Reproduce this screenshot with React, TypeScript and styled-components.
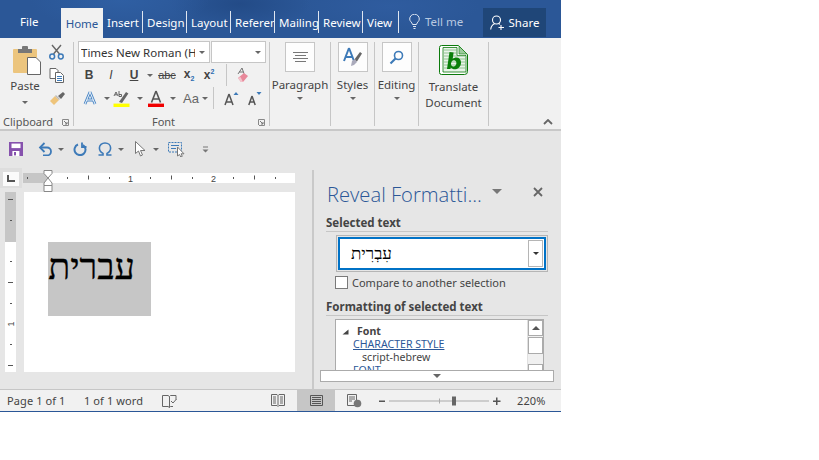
import React from "react";
import styled, { createGlobalStyle } from "styled-components";

const Global = createGlobalStyle`
  html, body { margin: 0; padding: 0; background: #fff; }
  body { font-family: "Noto Sans", "Open Sans", sans-serif; }
`;
const UI = `"Noto Sans", "Open Sans", sans-serif`;

const Win = styled.div`
  width: 561px; height: 412px; display: flex; flex-direction: column;
  background: #e6e6e6; overflow: hidden; font-family: ${UI}; color: #444; position: relative;
`;
const TitleBar = styled.div`
  height: 38px; flex: none; display: flex; align-items: flex-end; color: #fff;
  background:
    radial-gradient(ellipse 90px 30px at 120px 0px, #2f5fa3 0%, transparent 100%),
    radial-gradient(ellipse 70px 26px at 240px 4px, #234b87 0%, transparent 100%),
    radial-gradient(ellipse 90px 24px at 390px 6px, #2f5c9f 0%, transparent 100%),
    #2b5797;
`;
const Tab = styled.div<{ $w: number; $sep?: boolean; $active?: boolean }>`
  width: ${p => p.$w}px; height: ${p => (p.$active ? 30 : 22)}px; flex: none; box-sizing: border-box;
  display: flex; align-items: center; justify-content: ${p => (p.$active ? "center" : "flex-start")};
  margin-bottom: ${p => (p.$active ? 0 : 5)}px; padding-left: ${p => (p.$active ? 0 : 4)}px;
  font-size: 11.5px; white-space: nowrap; overflow: hidden;
  background: ${p => (p.$active ? "#f1f1f1" : "transparent")};
  color: ${p => (p.$active ? "#2b5797" : "#fff")};
  border-right: ${p => (p.$sep ? "1px solid #dfe6f0" : "none")};
`;
const FileTab = styled.div`
  width: 61px; height: 27px; margin-bottom: 3px; flex: none; display: flex; align-items: center;
  padding-left: 20px; box-sizing: border-box; font-size: 11.5px;
`;
const TellMe = styled.div`
  display: flex; align-items: center; gap: 5px; width: 84px; height: 27px; margin-bottom: 3px;
  padding-left: 10px; box-sizing: border-box; font-size: 11.5px; color: #b9c9e0; flex: none; white-space: nowrap;
`;
const Share = styled.div`
  width: 63px; height: 29px; margin-bottom: 1px; background: #1f4678; flex: none; display: flex; align-items: center;
  justify-content: center; gap: 4px; font-size: 11.5px; color: #fff;
`;
const Ribbon = styled.div`
  height: 93px; flex: none; background: #f1f1f1; display: flex; box-sizing: border-box;
  border-bottom: 2px solid #c8c8c8; position: relative;
`;
const Group = styled.div<{ $w: number }>`
  width: ${p => p.$w}px; flex: none; box-sizing: border-box; position: relative; height: 84px; margin-top: 4px;
  border-right: 1px solid #c6c6c6; display: flex; flex-direction: column;
`;
const GroupFooter = styled.div`
  position: absolute; left: 0; right: 0; bottom: -3px; height: 16px; display: flex; align-items: center;
  font-size: 11px; color: #555;
`;
const GroupName = styled.span<{ $center?: boolean }>`
  flex: 1; padding-left: ${p => (p.$center ? 0 : 3)}px; padding-right: ${p => (p.$center ? 5 : 0)}px; text-align: ${p => (p.$center ? "center" : "left")};
`;
const Launcher = styled.svg`
  width: 7px; height: 7px; margin: 2px 4px 0 0; flex: none;
`;
const ClipRow = styled.div`
  display: flex; padding-left: 3px;
`;
const PasteCol = styled.div`
  width: 44px; display: flex; flex-direction: column; align-items: center; padding-top: 4px;
`;
const ClipTools = styled.div`
  display: flex; flex-direction: column; gap: 8px; padding: 2px 0 0 2px;
`;
const Label = styled.div`
  font-size: 11.5px; line-height: 16px; color: #444; white-space: nowrap;
`;
const Caret = styled.span<{ $c?: string }>`
  display: inline-block; flex: none; width: 0; height: 0; border-left: 3px solid transparent;
  border-right: 3px solid transparent; border-top: 3px solid ${p => p.$c || "#666"};
`;
const FontGroupBody = styled.div`
  padding-left: 4px; display: flex; flex-direction: column;
`;
const ComboRow = styled.div`
  display: flex; gap: 1px; margin-top: -1px;
`;
const Combo = styled.div<{ $w: number }>`
  width: ${p => p.$w}px; height: 22px; background: #fff; border: 1px solid #c6c6c6; box-sizing: border-box;
  display: flex; align-items: center; padding: 0 4px 0 2px; font-size: 11.5px; color: #333; overflow: hidden;
  white-space: nowrap; justify-content: space-between;
`;
const ComboText = styled.span`
  width: 114px; overflow: hidden; flex: none;
`;
const ToolRow = styled.div<{ $mt: number }>`
  display: flex; align-items: center; height: 20px; margin-top: ${p => p.$mt}px; padding-left: 4px;
`;
const Tool = styled.div<{ $w: number; $ml?: number }>`
  width: ${p => p.$w}px; margin-left: ${p => p.$ml || 0}px; flex: none; display: flex; justify-content: center; align-items: center; height: 20px;
`;
const FmtLetter = styled.span<{ $u?: boolean; $s?: boolean; $i?: boolean; $b?: boolean; $size?: number; $c?: string }>`
  font-family: "Liberation Sans", sans-serif; font-size: ${p => p.$size || 12}px; color: ${p => p.$c || "#444"}; font-weight: ${p => (p.$b ? 700 : 400)};
  font-style: ${p => (p.$i ? "italic" : "normal")};
  text-decoration: ${p => (p.$u ? "underline" : p.$s ? "line-through" : "none")};
`;
const Sub = styled.span<{ $sup?: boolean }>`
  font-size: 7px; color: #2b6cb0; vertical-align: ${p => (p.$sup ? "super" : "sub")}; font-weight: 700;
`;
const VSep = styled.div`
  width: 1px; height: 22px; background: #c6c6c6; flex: none;
`;
const BigCol = styled.div`
  display: flex; flex-direction: column; align-items: center; height: 100%;
`;
const BigBox = styled.div`
  width: 30px; height: 30px; box-sizing: border-box; border: 1px solid #c6c6c6; background: #fdfdfd;
  display: flex; align-items: center; justify-content: center; margin-bottom: 5px; flex: none;
`;
const CaretLine = styled.div<{ $mt?: number }>`
  height: 10px; display: flex; align-items: center; margin-top: ${p => p.$mt || 0}px;
`;
const TranslateWrap = styled.div`
  height: 34px; padding-top: 3px;
`;
const Collapse = styled.svg`
  position: absolute; right: 8px; bottom: 4px; width: 10px; height: 6px;
`;
const Qat = styled.div`
  height: 38px; flex: none; display: flex; align-items: center; padding-left: 9px; margin-top: -1px;
`;
const QatIcon = styled.div<{ $ml: number }>`
  margin-left: ${p => p.$ml}px; display: flex; align-items: center; flex: none;
`;
const Work = styled.div`
  flex: 1; display: flex; min-height: 0; position: relative;
`;
const DocArea = styled.div`
  width: 312px; flex: none; position: relative; display: flex; flex-direction: column;
`;
const RulerRow = styled.div`
  height: 24px; flex: none; display: flex; align-items: flex-start;
`;
const Corner = styled.div`
  width: 22px; height: 20px; background: #dedede; flex: none; display: flex; align-items: center; justify-content: center;
`;
const CornerIn = styled.div`
  width: 16px; height: 14px; background: #fbfbfb; display: flex; align-items: center; justify-content: center; margin-top: 1px;
`;
const PageRow = styled.div`
  display: flex; height: 180px; padding-left: 5px;
`;
const Page = styled.div`
  width: 271px; height: 180px; background: #fff; margin-left: 8px; padding: 50px 0 0 24px; box-sizing: border-box; overflow: hidden;
`;
const Selected = styled.div`
  width: 103px; height: 74px; background: #c6c6c6; color: #000; font-family: "Liberation Serif", serif; font-size: 36px; line-height: 50px;
  direction: rtl; text-align: right; padding: 0 16px 0 0; box-sizing: border-box; -webkit-text-stroke: 0.3px #000;
`;
const Pane = styled.div`
  flex: 1; border-left: 2px solid #c9c9c9; margin-top: 2px; padding-left: 12px; box-sizing: border-box; position: relative; overflow: hidden;
`;
const PaneHead = styled.div`
  display: flex; align-items: center; height: 46px; padding: 0 0 0 1px;
`;
const PaneTitle = styled.div`
  font-size: 20.2px; color: #2b5797; font-family: "Open Sans", sans-serif; font-weight: 300; width: 165px; white-space: nowrap; flex: none; padding-top: 2px;
`;
const SectionTitle = styled.div<{ $mt: number }>`
  font-size: 11.5px; font-weight: 700; color: #444; border-bottom: 1px solid #c6c6c6; width: 222px; height: 14px; line-height: 13px;
  margin-top: ${p => p.$mt}px; white-space: nowrap; padding-bottom: 1px;
`;
const ComboOuter = styled.div`
  margin: 3px 0 0 10px; width: 212px; height: 37px; box-sizing: border-box; border: 1px solid #b5b5b5; padding: 1px; background: #e6e6e6;
`;
const ComboInner = styled.div`
  width: 100%; height: 100%; box-sizing: border-box; border: 2px solid #0072c6; background: #fff; display: flex; align-items: center; justify-content: space-between;
  padding: 1px;
`;
const Heb = styled.div`
  font-family: "Liberation Serif", serif; font-size: 17px; color: #000; margin-left: 10px; direction: rtl;
`;
const DropBtn = styled.div`
  width: 15px; height: 100%; box-sizing: border-box; border: 1px solid #b5b5b5; background: #fff; display: flex; align-items: center; justify-content: center;
`;
const CheckRow = styled.div`
  display: flex; align-items: center; gap: 4px; margin: 3px 0 0 9px; font-size: 11px; color: #444; height: 15px; white-space: nowrap;
`;
const CheckBox = styled.div`
  width: 13px; height: 13px; box-sizing: border-box; border: 1px solid #7a7a7a; background: #fff;
`;
const ListBox = styled.div`
  margin: 3px 0 0 9px; width: 209px; height: 55px; box-sizing: border-box; border: 1px solid #ababab; border-bottom: none; background: #fff; display: flex; position: relative;
`;
const ListText = styled.div`
  flex: 1; padding: 5px 0 0 17px; font-size: 10.6px; line-height: 13px; color: #444; overflow: hidden;
`;
const FontHead = styled.div`
  font-weight: 700; margin-left: 4px; position: relative;
`;
const Tri = styled.svg`
  position: absolute; left: -15px; top: 4px; width: 7px; height: 6px;
`;
const Link = styled.div`
  color: #2b5797; text-decoration: underline;
`;
const Plain = styled.div`
  margin-left: 9px;
`;
const Scroll = styled.div`
  width: 15px; flex: none; background: #f0f0f0; border-left: 1px solid #e0e0e0; display: flex; flex-direction: column;
`;
const ScrollBtn = styled.div`
  height: 16px; flex: none; box-sizing: border-box; border: 1px solid #ababab; background: #fff; display: flex; align-items: center; justify-content: center;
`;
const ScrollThumb = styled.div`
  height: 17px; flex: none; box-sizing: border-box; border: 1px solid #ababab; background: #fff; margin-top: 1px;
`;
const ScrollEnd = styled.div`
  height: 10px; flex: none; box-sizing: border-box; border: 1px solid #ababab; background: #fff; margin-top: 10px;
`;
const MoreBar = styled.div`
  position: absolute; left: 6px; top: 200px; width: 234px; height: 12px; box-sizing: border-box; border: 1px solid #ababab; background: #fff;
  display: flex; align-items: center; justify-content: center;
`;
const Status = styled.div`
  height: 23px; flex: none; box-sizing: border-box; background: #f1f1f1; border-top: 1px solid #c6c6c6; border-bottom: 1px solid #2b5797;
  display: flex; align-items: center; font-size: 11px; color: #444;
`;
const StatusText = styled.div<{ $w: number; $pl: number }>`
  width: ${p => p.$w}px; padding-left: ${p => p.$pl}px; flex: none; box-sizing: border-box; white-space: nowrap; letter-spacing: 0.1px;
`;
const ViewBtn = styled.div<{ $w: number; $on?: boolean; $ml?: number }>`
  width: ${p => p.$w}px; height: 21px; flex: none; display: flex; align-items: center; justify-content: center;
  margin-left: ${p => p.$ml || 0}px;
  background: ${p => (p.$on ? "#c6c6c6" : "transparent")};
`;
const Slider = styled.svg`
  width: 126px; height: 14px; flex: none; margin-left: 6px;
`;
const ProofIcon = styled.svg`
  flex: none;
`;
const CloseIcon = styled.svg`
  margin-left: 31px; margin-top: -3px; flex: none;
`;
const PaneCaret = styled(Caret)`
  border-left-width: 5px; border-right-width: 5px; border-top-width: 5px; margin-top: -4px;
`;
const PasteSvg = styled.svg`
  margin-left: 4px; flex: none;
`;
const PasteLabel = styled(Label)`
  margin-top: 3px;
`;
const RulerSvg = styled.svg`
  margin-top: 5px; margin-left: 1px; flex: none;
`;
const VRulerSvg = styled.svg`
  flex: none;
`;
const Marker = styled.svg`
  position: absolute; left: 43px; top: 2px; width: 10px; height: 22px;
`;

const Cut = () => (
  <svg width="15" height="16" viewBox="0 0 15 16" fill="none"><path d="M3 1l7.500 9M12 1L4.500 10" stroke="#666" strokeWidth="1.400"/><circle cx="3.200" cy="12.500" r="2.400" stroke="#3d7ab8" strokeWidth="1.500"/><circle cx="11.800" cy="12.500" r="2.400" stroke="#3d7ab8" strokeWidth="1.500"/></svg>
);
const Copy = () => (
  <svg width="16" height="15" viewBox="0 0 16 15" fill="none"><path d="M1 .5h6l2 2v8H1z" fill="#fff" stroke="#666"/><path d="M6.500 4.500h5l3 3v7h-8z" fill="#fff" stroke="#666"/><path d="M8 8.500h5M8 10.500h5M8 12.500h5" stroke="#3d7ab8"/></svg>
);
const Painter = () => (
  <svg width="17" height="15" viewBox="0 0 17 15"><path d="M1 10l5-5 4 4-5 5z" fill="#eec47b"/><path d="M6 5l4 4 1-1-4-4z" fill="#bbb"/><path d="M9 5l5-4 2 2-4 5z" fill="#666"/></svg>
);
const PasteIcon = () => (
  <PasteSvg width="28" height="29" viewBox="0 0 28 29"><rect x="0" y="3" width="24" height="24" rx="1" fill="#ecc57e"/><rect x="5" y="3" width="14" height="4" fill="#777"/><rect x="9" y="0" width="6" height="4" rx="1" fill="#777"/><path d="M14.500 11.500h8.500l4.500 4.500v12.500H14.500z" fill="#fff" stroke="#666"/></PasteSvg>
);
const LauncherIcon = () => (
  <Launcher viewBox="0 0 7 7" fill="none"><path d="M.5 6V.5H6.500V6.500H1" stroke="#888"/><path d="M2 2l3 3M5 3v2H3" stroke="#777"/></Launcher>
);
const BigA = () => (
  <svg width="14" height="16" viewBox="0 0 14 16"><path d="M7 2L2 14M7 2l5 12M4 10h6" stroke="#4a86c5" strokeWidth="2.800" fill="none"/><path d="M7 2L2 14M7 2l5 12M4 10h6" stroke="#fff" strokeWidth=".9" fill="none"/></svg>
);
const Highlight = () => (
  <svg width="17" height="17" viewBox="0 0 17 17"><path d="M1 6l2-4 2 4M2 4.800h2M6 1v5.500M6 4.500h2.500V6.500H6" stroke="#555" strokeWidth=".9" fill="none"/><path d="M6 12l7-10 2.400 1.600L9 13z" fill="#666"/><rect x="0.500" y="13.600" width="16" height="3.400" fill="#ffff00"/></svg>
);
const ColorA = () => (
  <svg width="16" height="17" viewBox="0 0 16 17"><path d="M8 1L3.500 12.500M8 1l4.500 11.500M5 9h6" stroke="#555" strokeWidth="1.600" fill="none"/><rect y="13.600" width="16" height="3.400" fill="#f00000"/></svg>
);
const Grow = ({ up }: { up: boolean }) => (
  <svg width="16" height="15" viewBox="0 0 16 15"><path d={up ? "M5 3L1 14M5 3l4 11M2.600 11h4.800" : "M5 5L1.800 14M5 5l3.200 9M3 11h4"} stroke="#555" strokeWidth="1.500" fill="none"/><path d={up ? "M9.500 4l2.500-3 2.500 3z" : "M9.500 1l2.500 3 2.500-3z"} fill="#3d7ab8"/></svg>
);
const Eraser = () => (
  <svg width="15" height="16" viewBox="0 0 15 16"><path d="M3 7l4-6 2 5.600M4.300 5h4" stroke="#666" fill="none" strokeWidth=".9"/><path d="M3 11l6-5 4 3-5 6H6z" fill="#e8889a"/><path d="M3 11l3 4h2l-2.500-5z" fill="#f4c4cd"/></svg>
);
const ParaIcon = () => (
  <svg width="15" height="11" viewBox="0 0 15 11" stroke="#777"><path d="M0 .5h15M2 3.500h11M0 6.500h15M2 9.500h11"/></svg>
);
const StylesIcon = () => (
  <svg width="20" height="20" viewBox="0 0 20 20"><path d="M6 1L1 14M6 1l5 13M2.800 10h6.400" stroke="#3d7ab8" strokeWidth="2" fill="none"/><path d="M11 13l6-8 2 1.500-5 8z" fill="#666"/><path d="M9 14l3-2 2 3-3 3-3 1z" fill="#aab"/></svg>
);
const FindIcon = () => (
  <svg width="15" height="15" viewBox="0 0 15 15" fill="none" stroke="#3d7ab8"><circle cx="9.500" cy="5.500" r="4" strokeWidth="1.600"/><path d="M6.500 8.500L1.500 13.500" strokeWidth="2.200"/></svg>
);
const TranslateIcon = () => (
  <svg width="29" height="31" viewBox="0 0 29 31"><path d="M2.500.5h17l9 9v17a3 3 0 01-3 3h-23a2 2 0 01-2-2v-25a2 2 0 012-2z" fill="#fff" stroke="#0b7a0b"/><path d="M4 2.500h14v8h9v16.500H4z" fill="#e9f4e9" stroke="#0b7a0b" strokeWidth=".8"/><path d="M20 1l8 8h-8z" fill="#9ccb9c" stroke="#0b7a0b" strokeWidth=".6"/><path d="M5 5h13M5 8h13M5 11h21M5 14h21M5 17h21M5 20h21M5 23h21" stroke="#7cb87c" strokeWidth=".8"/><path d="M10.500 7L8 24h3.400l.4-1.500c1 1.200 2.400 1.800 4 1.800 3.600 0 6.200-3 6.200-6.800 0-3-1.800-5-4.600-5-1.500 0-2.700.5-3.700 1.500l.9-6.500zM15 15.300c1.400 0 2.400 1 2.400 2.600 0 2-1.300 3.600-3 3.600-1.400 0-2.400-1-2.400-2.500 0-2 1.300-3.700 3-3.700z" fill="#0a7f0a" fillRule="evenodd"/></svg>
);
const Save = () => (
  <svg width="14" height="14" viewBox="0 0 14 14"><path d="M0 0h14v14H0z" fill="#8652ad"/><rect x="2.500" y="1.600" width="9" height="4.500" fill="#fff"/><rect x="3.400" y="9" width="7" height="5" fill="#fff"/><rect x="5" y="10" width="2" height="3.400" fill="#8652ad"/></svg>
);
const Undo = () => (
  <svg width="15" height="14" viewBox="0 0 15 14" fill="none"><path d="M2 5.500h7a4 4 0 010 8H5" stroke="#3d7ab8" strokeWidth="1.800"/><path d="M6.500 1L2 5.500 6.500 10" stroke="#3d7ab8" strokeWidth="1.800"/></svg>
);
const Redo = () => (
  <svg width="14" height="14" viewBox="0 0 14 14" fill="none"><path d="M5 2.500A5.500 5.500 0 1010 3" stroke="#3d7ab8" strokeWidth="2"/><path d="M9 .5v4.500h4.500" stroke="#3d7ab8" strokeWidth="1.800"/></svg>
);
const Omega = () => <svg width="14" height="14" viewBox="0 0 14 14" fill="none"><path d="M.5 13h4.500v-1.600C2.800 10.200 1.400 8.200 1.400 6c0-3.100 2.500-5 5.600-5s5.600 1.900 5.600 5c0 2.200-1.400 4.200-3.600 5.400V13h4.500" stroke="#3d7ab8" strokeWidth="1.600"/></svg>;
const Pointer = () => <svg width="11" height="16" viewBox="0 0 11 16"><path d="M.5.500v12l3-2.500 2 5 2-1-2-4.500h4.500z" fill="#fff" stroke="#777"/></svg>;
const SelectIcon = () => <svg width="17" height="15" viewBox="0 0 17 15" fill="none"><path d="M.5.500h13v9.500H.5z" stroke="#3d7ab8" strokeDasharray="2 1"/><path d="M3 3.500h8M3 6.500h5" stroke="#3d7ab8"/><path d="M9.500 5v9l2-1.500 1.300 2.500 1.500-.7-1.300-2.500h3z" fill="#fff" stroke="#777"/></svg>;
const Customize = () => <svg width="7" height="7" viewBox="0 0 7 7" fill="#777"><path d="M1 .5h5v1H1zM.5 3.500h6L3.500 6.500z"/></svg>;

const HRuler = () => (
  <RulerSvg width="272" height="10" viewBox="0 0 272 10">
    <rect width="272" height="10" fill="#fff" />
    <rect width="24" height="10" fill="#c6c6c6" />
    {[4, 44, 86, 127, 169, 210, 252].map(x => (<rect key={x} x={x} y="4" width="1" height="2" fill="#555" />))}
    {[65, 148, 231].map(x => (<rect key={x} x={x} y="2.500" width="1" height="4" fill="#555" />))}
    {[105, 188].map((x, i) => (<text key={x} x={x} y="8.500" fontSize="9" fontFamily="Liberation Sans" fill="#444">{i + 1}</text>))}
  </RulerSvg>
);
const VRuler = () => (
  <VRulerSvg width="11" height="180" viewBox="0 0 11 180">
    <rect width="11" height="180" fill="#fff" />
    <rect width="11" height="50" fill="#c6c6c6" />
    {[28, 69, 111, 152].map(y => (<rect key={y} x={5} y={y} width="2" height="1" fill="#555" />))}
    {[7, 90, 173].map(y => (<rect key={y} x={3} y={y} width="5" height="1" fill="#555" />))}
    <text x="0" y="0" fontSize="9" fontFamily="Liberation Sans" fill="#444" transform="translate(8.500 134.500) rotate(-90)">1</text>
  </VRulerSvg>
);

export default function App() {
  return (
    <>
      <Global />
      <Win>
        <TitleBar>
          <FileTab>File</FileTab>
          <Tab $w={42} $active>Home</Tab>
          <Tab $w={40} $sep>Insert</Tab>
          <Tab $w={44} $sep>Design</Tab>
          <Tab $w={44} $sep>Layout</Tab>
          <Tab $w={44} $sep>Referen</Tab>
          <Tab $w={44} $sep>Mailing</Tab>
          <Tab $w={44} $sep>Review</Tab>
          <Tab $w={36} $sep>View</Tab>
          <TellMe>
            <svg width="11" height="15" viewBox="0 0 11 15" fill="none" stroke="#dfe7f2"><path d="M3.500 10.500C3 8 .7 7.500.7 5a4.800 4.800 0 019.600 0c0 2.500-2.300 3-2.800 5.500zM4 12.500h3M4.500 14.500h2"/></svg>
            Tell me
          </TellMe>
          <Share>
            <svg width="15" height="15" viewBox="0 0 15 15" fill="none" stroke="#fff" strokeWidth="1.100"><circle cx="6.500" cy="5" r="4"/><path d="M.7 14.500c.3-3 2-5 3.800-5.800M8.500 8.500l1.500.7M11 10v5M8.500 12.500h5.500"/></svg>
            Share
          </Share>
        </TitleBar>
        <Ribbon>
          <Group $w={74}>
            <ClipRow>
              <PasteCol>
                <PasteIcon />
                <PasteLabel>Paste</PasteLabel>
                <CaretLine $mt={3}><Caret /></CaretLine>
              </PasteCol>
              <ClipTools>
                <Cut /><Copy /><Painter />
              </ClipTools>
            </ClipRow>
            <GroupFooter><GroupName>Clipboard</GroupName><LauncherIcon /></GroupFooter>
          </Group>
          <Group $w={196}>
            <FontGroupBody>
              <ComboRow>
                <Combo $w={132}><ComboText>Times New Roman (H</ComboText><Caret /></Combo>
                <Combo $w={55}><span /><Caret /></Combo>
              </ComboRow>
              <ToolRow $mt={2}>
                <Tool $w={12} $ml={1}><FmtLetter $b>B</FmtLetter></Tool>
                <Tool $w={10} $ml={11}><FmtLetter $i>I</FmtLetter></Tool>
                <Tool $w={12} $ml={12}><FmtLetter $u $b>U</FmtLetter></Tool>
                <Tool $w={8} $ml={6}><Caret /></Tool>
                <Tool $w={20} $ml={3}><FmtLetter $s $size={11}>abc</FmtLetter></Tool>
                <Tool $w={16} $ml={4}><FmtLetter $b>x<Sub>2</Sub></FmtLetter></Tool>
                <Tool $w={16} $ml={4}><FmtLetter $b>x<Sub $sup>2</Sub></FmtLetter></Tool>
                <Tool $w={1} $ml={9}><VSep /></Tool>
                <Tool $w={16} $ml={7}><Eraser /></Tool>
              </ToolRow>
              <ToolRow $mt={3}>
                <Tool $w={16}><BigA /></Tool>
                <Tool $w={8} $ml={5}><Caret /></Tool>
                <Tool $w={17} $ml={2}><Highlight /></Tool>
                <Tool $w={8} $ml={6}><Caret /></Tool>
                <Tool $w={16} $ml={4}><ColorA /></Tool>
                <Tool $w={8} $ml={5}><Caret /></Tool>
                <Tool $w={16} $ml={6}><FmtLetter $size={13} $c="#666">Aa</FmtLetter></Tool>
                <Tool $w={8} $ml={2}><Caret /></Tool>
                <Tool $w={1} $ml={4}><VSep /></Tool>
                <Tool $w={16} $ml={10}><Grow up /></Tool>
                <Tool $w={16} $ml={7}><Grow up={false} /></Tool>
              </ToolRow>
            </FontGroupBody>
            <GroupFooter><GroupName $center>Font</GroupName><LauncherIcon /></GroupFooter>
          </Group>
          <Group $w={61}>
            <BigCol><BigBox><ParaIcon /></BigBox><Label>Paragraph</Label><CaretLine><Caret /></CaretLine></BigCol>
          </Group>
          <Group $w={44}>
            <BigCol><BigBox><StylesIcon /></BigBox><Label>Styles</Label><CaretLine><Caret /></CaretLine></BigCol>
          </Group>
          <Group $w={44}>
            <BigCol><BigBox><FindIcon /></BigBox><Label>Editing</Label><CaretLine><Caret /></CaretLine></BigCol>
          </Group>
          <Group $w={70}>
            <BigCol>
              <TranslateWrap><TranslateIcon /></TranslateWrap>
              <Label>Translate</Label>
              <Label>Document</Label>
            </BigCol>
          </Group>
          <Collapse viewBox="0 0 10 6" fill="none"><path d="M1 5l4-4 4 4" stroke="#666" strokeWidth="1.800" /></Collapse>
        </Ribbon>
        <Qat>
          <QatIcon $ml={0}><Save /></QatIcon>
          <QatIcon $ml={15}><Undo /></QatIcon>
          <QatIcon $ml={5}><Caret /></QatIcon>
          <QatIcon $ml={9}><Redo /></QatIcon>
          <QatIcon $ml={11}><Omega /></QatIcon>
          <QatIcon $ml={6}><Caret /></QatIcon>
          <QatIcon $ml={11}><Pointer /></QatIcon>
          <QatIcon $ml={7}><Caret /></QatIcon>
          <QatIcon $ml={9}><SelectIcon /></QatIcon>
          <QatIcon $ml={17}><Customize /></QatIcon>
        </Qat>
        <Work>
          <DocArea>
            <RulerRow>
              <Corner><CornerIn><svg width="8" height="7" viewBox="0 0 8 7"><path d="M0 0h2v5h6v2H0z" fill="#555" /></svg></CornerIn></Corner>
              <HRuler />
            </RulerRow>
            <Marker viewBox="0 0 10 22" fill="#fff" stroke="#888"><path d="M1 .5h8v3L5 8 1 3.500z" /><path d="M5 8l4 5v2.500H1V13z" /><path d="M1 15.500h8v6H1z" /></Marker>
            <PageRow>
              <VRuler />
              <Page><Selected>עברית</Selected></Page>
            </PageRow>
          </DocArea>
          <Pane>
            <PaneHead>
              <PaneTitle>Reveal Formatti...</PaneTitle>
              <PaneCaret $c="#777" />
              <CloseIcon width="10" height="10" viewBox="0 0 10 10" stroke="#666" strokeWidth="1.800"><path d="M1 1l8 8M9 1l-8 8" /></CloseIcon>
            </PaneHead>
            <SectionTitle $mt={0}>Selected text</SectionTitle>
            <ComboOuter>
              <ComboInner>
                <Heb>עִבְרִית</Heb>
                <DropBtn><Caret $c="#333" /></DropBtn>
              </ComboInner>
            </ComboOuter>
            <CheckRow><CheckBox />Compare to another selection</CheckRow>
            <SectionTitle $mt={10}>Formatting of selected text</SectionTitle>
            <ListBox>
              <ListText>
                <FontHead><Tri viewBox="0 0 7 6"><path d="M6.500.5v5H.5z" fill="#444" /></Tri>Font</FontHead>
                <Link>CHARACTER STYLE</Link>
                <Plain>script-hebrew</Plain>
                <Link>FONT</Link>
              </ListText>
              <Scroll>
                <ScrollBtn><svg width="8" height="4" viewBox="0 0 8 4" fill="#555"><path d="M0 4l4-4 4 4z" /></svg></ScrollBtn>
                <ScrollThumb />
                <ScrollEnd />
              </Scroll>
            </ListBox>
            <MoreBar><svg width="8" height="4" viewBox="0 0 8 4" fill="#666"><path d="M0 0h8L4 4z" /></svg></MoreBar>
          </Pane>
        </Work>
        <Status>
          <StatusText $w={84} $pl={7}>Page 1 of 1</StatusText>
          <StatusText $w={78} $pl={0}>1 of 1 word</StatusText>
          <ProofIcon width="15" height="14" viewBox="0 0 15 14" fill="none" stroke="#666"><path d="M.5 1.500h5.500l1.500 1v11L6 12.500H.5zM7.500 2.500l1-1H14v4M7.500 13.500l1-1H11" /><path d="M9 7l2 2 3.500-4" /></ProofIcon>
          <ViewBtn $w={38} $ml={82}><svg width="14" height="13" viewBox="0 0 14 13" fill="none" stroke="#666"><path d="M.5.500H6l1 1 1-1h5.500v11H8l-1 1-1-1H.5zM7 1.500v10M2 3h3M2 5h3M2 7h3M2 9h3M9 3h3M9 5h3M9 7h3M9 9h3" /></svg></ViewBtn>
          <ViewBtn $w={38} $on><svg width="13" height="11" viewBox="0 0 13 11" fill="none" stroke="#555"><path d="M.5.500h12v10H.5zM2 2.500h9M2 4.500h9M2 6.500h9M2 8.500h9" /></svg></ViewBtn>
          <ViewBtn $w={38}><svg width="15" height="14" viewBox="0 0 15 14" fill="none" stroke="#666"><path d="M.5.500h9v11H.5zM2 3h6M2 5h6M2 7h3" /><circle cx="10.500" cy="9.500" r="3.800" fill="#777" stroke="none" /></svg></ViewBtn>
          <Slider viewBox="0 0 126 14">
            <rect x="0" y="6.500" width="6" height="1.500" fill="#555" />
            <rect x="10" y="6.500" width="100" height="1" fill="#aaa" />
            <rect x="60" y="4.500" width="1" height="5" fill="#aaa" />
            <rect x="73" y="2.500" width="4" height="9" fill="#666" />
            <path d="M114 6.500h3v-3h1.500v3h3V8h-3v3H117V8h-3z" fill="#555" />
          </Slider>
          <StatusText $w={40} $pl={12}>220%</StatusText>
        </Status>
      </Win>
    </>
  );
}
